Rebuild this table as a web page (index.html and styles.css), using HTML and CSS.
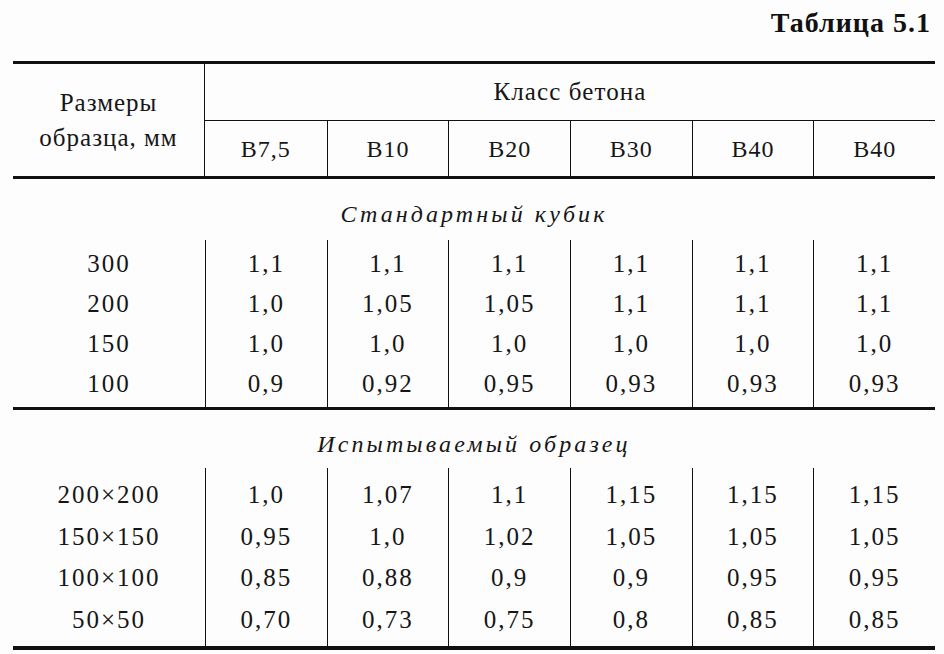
FILE: index.html
```html
<!DOCTYPE html>
<html lang="ru">
<head>
<meta charset="utf-8">
<title>Таблица 5.1</title>
<link rel="stylesheet" href="styles.css">
</head>
<body>
<div class="page">
  <div class="caption">Таблица 5.1</div>
  <table class="data">
    <colgroup>
      <col class="c-size">
      <col class="c-val"><col class="c-val"><col class="c-val"><col class="c-val"><col class="c-val"><col class="c-val">
    </colgroup>
    <thead>
      <tr class="h1">
        <th rowspan="2" class="size-head">Размеры<br>образца, мм</th>
        <th colspan="6" class="group">Класс бетона</th>
      </tr>
      <tr class="h2">
        <th>В7,5</th><th>В10</th><th>В20</th><th>В30</th><th>В40</th><th>В40</th>
      </tr>
    </thead>
    <tbody class="sec sec-a">
      <tr class="sec-title"><td colspan="7">Стандартный кубик</td></tr>
      <tr class="row first"><td>300</td><td>1,1</td><td>1,1</td><td>1,1</td><td>1,1</td><td>1,1</td><td>1,1</td></tr>
      <tr class="row"><td>200</td><td>1,0</td><td>1,05</td><td>1,05</td><td>1,1</td><td>1,1</td><td>1,1</td></tr>
      <tr class="row"><td>150</td><td>1,0</td><td>1,0</td><td>1,0</td><td>1,0</td><td>1,0</td><td>1,0</td></tr>
      <tr class="row last"><td>100</td><td>0,9</td><td>0,92</td><td>0,95</td><td>0,93</td><td>0,93</td><td>0,93</td></tr>
    </tbody>
    <tbody class="sec sec-b">
      <tr class="sec-title"><td colspan="7">Испытываемый образец</td></tr>
      <tr class="row first"><td>200×200</td><td>1,0</td><td>1,07</td><td>1,1</td><td>1,15</td><td>1,15</td><td>1,15</td></tr>
      <tr class="row"><td>150×150</td><td>0,95</td><td>1,0</td><td>1,02</td><td>1,05</td><td>1,05</td><td>1,05</td></tr>
      <tr class="row"><td>100×100</td><td>0,85</td><td>0,88</td><td>0,9</td><td>0,9</td><td>0,95</td><td>0,95</td></tr>
      <tr class="row last"><td>50×50</td><td>0,70</td><td>0,73</td><td>0,75</td><td>0,8</td><td>0,85</td><td>0,85</td></tr>
    </tbody>
  </table>
</div>
</body>
</html>
```

FILE: styles.css
```css
html, body {
  margin: 0;
  padding: 0;
  background: #fdfdfd;
}

body {
  font-family: "Liberation Serif", "Times New Roman", serif;
  color: #161616;
}

.page {
  width: 922px;
  padding-left: 13px;
}

.caption {
  box-sizing: border-box;
  height: 61px;
  padding-top: 8px;
  padding-right: 4px;
  text-align: right;
  font-weight: bold;
  font-size: 28px;
  line-height: 30px;
  letter-spacing: 1px;
  color: #111;
}

.data {
  width: 922px;
  table-layout: fixed;
  border-collapse: separate;
  border-spacing: 0;
  font-size: 25px;
}

.c-size { width: 192px; }

.data th,
.data td {
  padding: 0;
  text-align: center;
  vertical-align: middle;
  font-weight: normal;
}

/* header */
.size-head {
  border-top: 3px solid #111;
  border-bottom: 3px solid #111;
  border-right: 1px solid #111;
  line-height: 35px;
  font-size: 25px;
  letter-spacing: 1px;
}

.group {
  box-sizing: border-box;
  height: 60px;
  border-top: 3px solid #111;
  border-bottom: 1px solid #111;
  font-size: 25px;
  letter-spacing: 1.1px;
  line-height: 30px;
}

.h2 th {
  box-sizing: border-box;
  height: 58px;
  border-bottom: 3px solid #111;
  font-size: 24px;
  letter-spacing: 1px;
  line-height: 30px;
}

.h2 th + th {
  border-left: 1px solid #111;
}

/* section titles */
.sec-title td {
  font-style: italic;
  font-size: 24px;
  letter-spacing: 3.1px;
  line-height: 30px;
  vertical-align: top;
}

.sec-a .sec-title td {
  box-sizing: border-box;
  height: 61px;
  padding-top: 20px;
}

.sec-b .sec-title td {
  box-sizing: border-box;
  height: 58px;
  padding-top: 19px;
}

/* data rows */
.row td {
  letter-spacing: 2px;
}

.row td + td {
  border-left: 1px solid #111;
}

.sec-a .row td {
  line-height: 40px;
}

.sec-a .row.first td { padding-top: 4px; }
.sec-a .row.last td {
  padding-bottom: 3px;
  border-bottom: 3px solid #111;
}

.sec-b .row td {
  line-height: 41.5px;
}

.sec-b .row.first td { padding-top: 6px; }
.sec-b .row.last td {
  padding-bottom: 6px;
  border-bottom: 4px solid #111;
}
```
